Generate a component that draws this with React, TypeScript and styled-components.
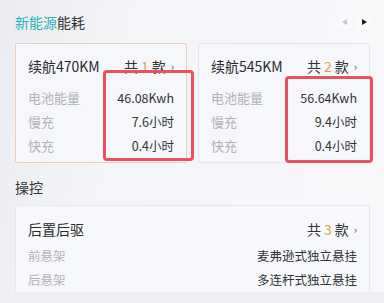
import styled, { createGlobalStyle } from 'styled-components';

const GlobalStyle = createGlobalStyle`
  * {
    box-sizing: border-box;
  }
  body {
    margin: 0;
    font-family: "Noto Sans CJK SC", "Noto Sans", sans-serif;
    background: #f6f7fa;
  }
`;

const Page = styled.div`
  position: relative;
  height: 303px;
  padding: 14px 14px 0 15px;
  overflow: hidden;
  background: linear-gradient(100deg, #eaecf1 0%, #f4f5f8 30%, #f8f8fb 100%);
`;

const SectionHeader = styled.div<{ $gap?: number }>`
  display: flex;
  align-items: center;
  justify-content: space-between;
  height: 16px;
  margin-top: ${p => p.$gap ?? 0}px;
`;

const Title = styled.p`
  margin: 0;
  color: #333;
  font-size: 14px;
  line-height: 16px;

  .accent {
    color: #2ab3b8;
  }
`;

const Pager = styled.div`
  display: flex;
  gap: 5px;
  margin-right: -1px;
`;

const PagerButton = styled.button<{ $active?: boolean }>`
  display: flex;
  align-items: center;
  justify-content: center;
  width: 14px;
  height: 14px;
  padding: 0;
  border: none;
  border-radius: 2px;
  background: #fafafc;

  &::before {
    content: '';
    width: 0;
    height: 0;
    border-top: 3.5px solid transparent;
    border-bottom: 3.5px solid transparent;
    ${p =>
      p.$active
        ? 'border-left: 5px solid #1a1a1a; margin-left: 1px;'
        : 'border-right: 5px solid #c8c9ce; margin-right: 1px;'}
  }
`;

const CardGrid = styled.div`
  display: grid;
  grid-template-columns: 172px 172px;
  gap: 11px;
  margin-top: 13px;
`;

const Card = styled.div<{ $selected?: boolean }>`
  position: relative;
  height: 120px;
  padding: 12px 12px 0;
  border: 1px solid ${p => (p.$selected ? '#f2cbb7' : '#e5e6eb')};
  border-radius: 2px;
  background: #f6f7fa;
`;

const WideCard = styled(Card)`
  height: 110px;
  padding-top: 13px;
  margin-top: 10px;
  border-color: #e7e8ed;
  background: #f7f8fb;
`;

const CardHead = styled.div`
  display: flex;
  align-items: center;
  justify-content: space-between;
  height: 20px;
`;

const HeadName = styled.span`
  color: #2b2b2b;
  font-size: 14px;
  line-height: 20px;
`;

const Count = styled.span`
  display: flex;
  align-items: center;
  color: #333;
  font-size: 14px;
  line-height: 20px;

  b {
    margin: 0 3px;
    color: #dca24b;
    font-weight: 400;
  }

  i {
    margin-left: 5px;
    color: #555;
    font-size: 11px;
    font-style: normal;
  }
`;

const Rows = styled.div<{ $top: number }>`
  display: flex;
  flex-direction: column;
  margin-top: ${p => p.$top}px;
`;

const Row = styled.div<{ $size?: number }>`
  display: flex;
  align-items: center;
  justify-content: space-between;
  height: 24px;
  font-size: ${p => p.$size ?? 13}px;
  line-height: 24px;

  .label {
    color: #b1b2b9;
  }
  .value {
    color: #333;
    font-size: 12.5px;
  }
`;

const Highlight = styled.div<{ $left: number; $top: number; $w: number; $h: number }>`
  position: absolute;
  left: ${p => p.$left}px;
  top: ${p => p.$top}px;
  width: ${p => p.$w}px;
  height: ${p => p.$h}px;
  border: 3px solid #ea5060;
  border-radius: 4px;
  pointer-events: none;
`;

const BottomFade = styled.div`
  position: absolute;
  left: 0;
  right: 0;
  bottom: 0;
  height: 11px;
  background: #eeeff3;
`;

const ranges = [
  { name: '续航470KM', count: 1, battery: '46.08Kwh', slow: '7.6小时', fast: '0.4小时', selected: true, mark: { left: 87, top: 26, w: 91, h: 91 } },
  { name: '续航545KM', count: 2, battery: '56.64Kwh', slow: '9.4小时', fast: '0.4小时', selected: false, mark: { left: 86, top: 32, w: 88, h: 87 } },
];

export default function App() {
  return (
    <Page>
      <GlobalStyle />
      <SectionHeader>
        <Title>
          <span className="accent">新能源</span>能耗
        </Title>
        <Pager>
          <PagerButton />
          <PagerButton $active />
        </Pager>
      </SectionHeader>

      <CardGrid>
        {ranges.map(r => (
          <Card key={r.name} $selected={r.selected}>
            <CardHead>
              <HeadName>{r.name}</HeadName>
              <Count>
                共<b>{r.count}</b>款<i>›</i>
              </Count>
            </CardHead>
            <Rows $top={10}>
              <Row>
                <span className="label">电池能量</span>
                <span className="value">{r.battery}</span>
              </Row>
              <Row>
                <span className="label">慢充</span>
                <span className="value">{r.slow}</span>
              </Row>
              <Row>
                <span className="label">快充</span>
                <span className="value">{r.fast}</span>
              </Row>
            </Rows>
            <Highlight $left={r.mark.left} $top={r.mark.top} $w={r.mark.w} $h={r.mark.h} />
          </Card>
        ))}
      </CardGrid>

      <SectionHeader $gap={16}>
        <Title>操控</Title>
      </SectionHeader>

      <WideCard>
        <CardHead>
          <HeadName>后置后驱</HeadName>
          <Count>
            共<b>3</b>款<i>›</i>
          </Count>
        </CardHead>
        <Rows $top={5}>
          <Row $size={12.5}>
            <span className="label">前悬架</span>
            <span className="value">麦弗逊式独立悬挂</span>
          </Row>
          <Row $size={12.5}>
            <span className="label">后悬架</span>
            <span className="value">多连杆式独立悬挂</span>
          </Row>
        </Rows>
      </WideCard>

      <BottomFade />
    </Page>
  );
}
